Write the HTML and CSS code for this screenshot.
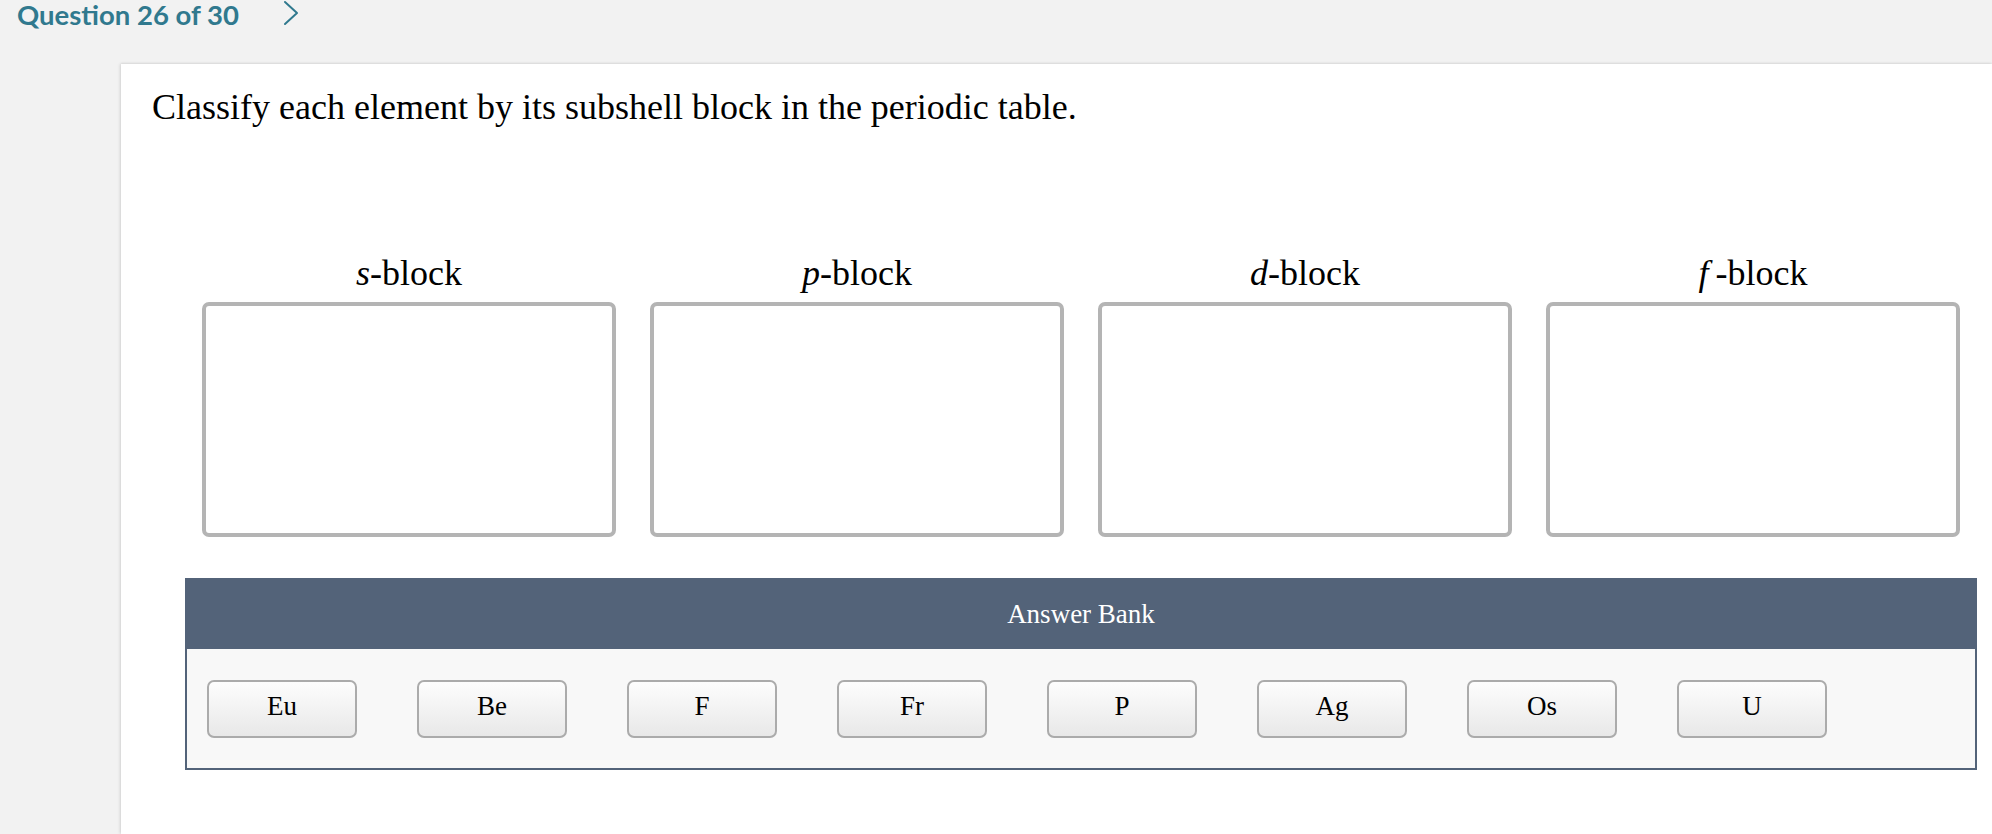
FILE: index.html
```html
<!DOCTYPE html>
<html lang="en">
<head>
<meta charset="utf-8">
<title>Question 26 of 30</title>
<link rel="stylesheet" href="styles.css">
</head>
<body>
<header class="topbar">
  <span class="qnum">Question 26 of 30</span>
  <svg class="chev" width="16" height="26" viewBox="0 0 16 26" aria-hidden="true">
    <polyline points="2,2 14,13 2,24" fill="none" stroke="#30798e" stroke-width="2" stroke-linecap="round" stroke-linejoin="round"/>
  </svg>
</header>
<main class="layout">
  <section class="panel">
    <p class="prompt">Classify each element by its subshell block in the periodic table.</p>
    <div class="activity">
      <div class="bins">
        <div class="bin">
          <div class="bin-label"><i>s</i>-block</div>
          <div class="bin-drop"></div>
        </div>
        <div class="bin">
          <div class="bin-label"><i>p</i>-block</div>
          <div class="bin-drop"></div>
        </div>
        <div class="bin">
          <div class="bin-label"><i>d</i>-block</div>
          <div class="bin-drop"></div>
        </div>
        <div class="bin">
          <div class="bin-label"><i class="fvar">f</i>-block</div>
          <div class="bin-drop"></div>
        </div>
      </div>
      <div class="bank">
        <div class="bank-head">Answer Bank</div>
        <div class="bank-body">
          <div class="chip">Eu</div>
          <div class="chip">Be</div>
          <div class="chip">F</div>
          <div class="chip">Fr</div>
          <div class="chip">P</div>
          <div class="chip">Ag</div>
          <div class="chip">Os</div>
          <div class="chip">U</div>
        </div>
      </div>
    </div>
  </section>
</main>
</body>
</html>
```
FILE: styles.css
```css
html, body {
  margin: 0;
  padding: 0;
}
body {
  background: #f2f2f2;
  font-family: "Liberation Serif", "Times New Roman", serif;
  color: #000;
  width: 1992px;
  height: 834px;
  overflow: hidden;
}
.topbar {
  height: 64px;
  display: flex;
  align-items: flex-start;
  padding-left: 17px;
  box-sizing: border-box;
}
.qnum {
  font-family: Lato, "Open Sans", sans-serif;
  font-weight: 700;
  font-size: 27.5px;
  line-height: 30px;
  color: #30798e;
}
.chev {
  margin-left: 44px;
  margin-top: 0px;
}
.layout {
  display: flex;
  height: 770px;
}
.panel {
  margin-left: 121px;
  flex: 1;
  background: #fff;
  box-shadow: -1px 0 3px rgba(0,0,0,0.12), 0 -1px 2px rgba(0,0,0,0.06);
  padding-top: 22px;
  box-sizing: border-box;
}
.prompt {
  margin: 0;
  padding-left: 31px;
  font-size: 36px;
  line-height: 42px;
}
.activity {
  margin-left: 64px;
  width: 1792px;
  margin-top: 124px;
}
.bins {
  display: grid;
  grid-template-columns: repeat(4, 414px);
  column-gap: 34px;
  padding: 0 17px;
}
.bin-label {
  text-align: center;
  font-size: 36px;
  line-height: 42px;
  margin-bottom: 8px;
}
.fvar {
  margin-right: 0.2em;
}
.bin-drop {
  height: 235px;
  box-sizing: border-box;
  border: 4px solid #b4b4b4;
  border-radius: 7px;
  background: #fff;
}
.bank {
  margin-top: 41px;
}
.bank-head {
  background: #536379;
  color: #fff;
  text-align: center;
  font-size: 27px;
  line-height: 72px;
  height: 71px;
}
.bank-body {
  background: #f8f8f8;
  border: 2px solid #536379;
  border-top: none;
  display: flex;
  gap: 60px;
  padding: 31px 20px 30px;
}
.chip {
  width: 150px;
  height: 58px;
  box-sizing: border-box;
  border: 2px solid #ababab;
  border-radius: 7px;
  background: linear-gradient(#fdfdfd, #e8e8e8);
  text-align: center;
  font-size: 27px;
  line-height: 48px;
  padding-bottom: 6px;
}
```
